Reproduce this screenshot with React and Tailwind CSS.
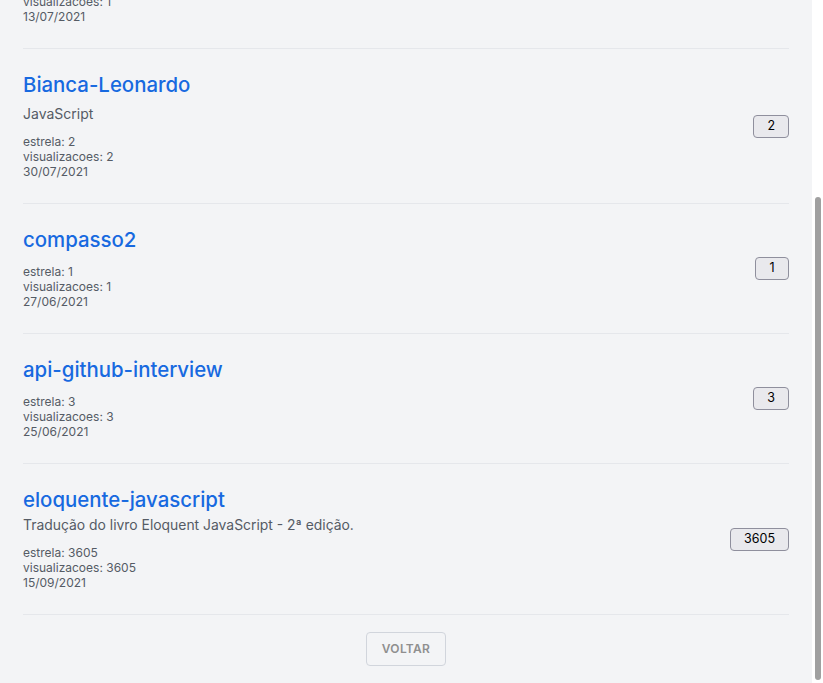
import React from 'react';

const repos = [
  { name: 'Bianca-Leonardo', language: 'JavaScript', stars: 2, watchers: 2, date: '30/07/2021' },
  { name: 'compasso2', stars: 1, watchers: 1, date: '27/06/2021' },
  { name: 'api-github-interview', stars: 3, watchers: 3, date: '25/06/2021' },
  {
    name: 'eloquente-javascript',
    description: 'Tradução do livro Eloquent JavaScript - 2ª edição.',
    stars: 3605,
    watchers: 3605,
    date: '15/09/2021',
  },
];

function RepoItem({ repo }) {
  const hasText = repo.language || repo.description;
  return (
    <li className="flex items-center justify-between border-b border-gray-200 py-6">
      <div>
        <h2 className="text-[20.4px] leading-[24px] font-medium text-[#1769e0]">{repo.name}</h2>
        {repo.language && <p className="mt-[7px] text-sm leading-5 text-[#555b65]">{repo.language}</p>}
        {repo.description && <p className="mt-[3px] text-[13.9px] leading-5 text-[#555b65]">{repo.description}</p>}
        <div className={hasText ? 'mt-2.5 text-xs leading-[15px] text-[#555b65]' : 'mt-3 text-xs leading-[15px] text-[#555b65]'}>
          <p>estrela: {repo.stars}</p>
          <p>visualizacoes: {repo.watchers}</p>
          <p>{repo.date}</p>
        </div>
      </div>
      <button className="h-[23px] min-w-[34px] rounded-[4px] border border-[#8f8f9d] bg-[#e9e9ed] px-[13px] text-[12.5px] text-black">
        {repo.stars}
      </button>
    </li>
  );
}

export default function App() {
  return (
    <div className="flex h-[683px] overflow-hidden font-['Inter',sans-serif]">
      <main className="flex-1 overflow-hidden bg-gray-100">
        <div className="-mt-[6px] px-[23px]">
          <div className="border-b border-gray-200 pb-6 text-xs leading-[15px] text-[#555b65]">
            <p>visualizacoes: 1</p>
            <p>13/07/2021</p>
          </div>
          <ul>
            {repos.map((repo) => (
              <RepoItem key={repo.name} repo={repo} />
            ))}
          </ul>
          <div className="mt-[17px] flex justify-center">
            <button className="h-[34px] rounded-[4px] border border-gray-300 px-[15px] text-xs font-semibold tracking-wide text-[#8f8f8f]">
              VOLTAR
            </button>
          </div>
        </div>
      </main>
      <div className="flex w-[11px] flex-col bg-white pb-[3px] pl-[3px] pr-[2px] pt-[197px]">
        <div className="flex-1 rounded-full bg-[#a0a0a0]" />
      </div>
    </div>
  );
}
